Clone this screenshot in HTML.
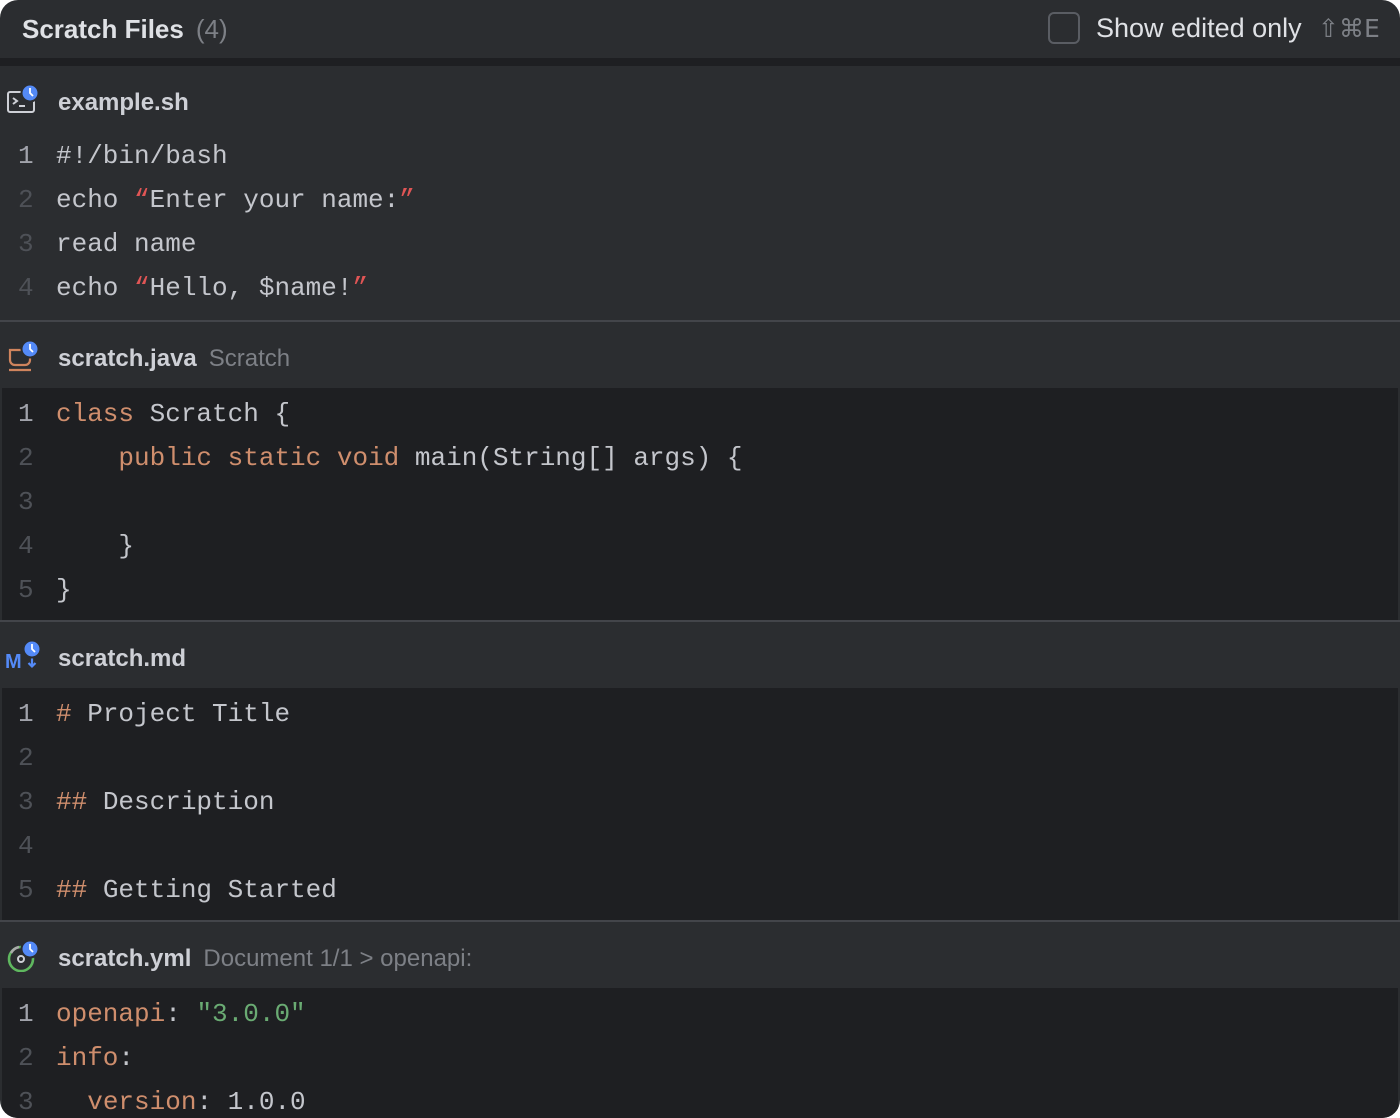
<!DOCTYPE html>
<html><head><meta charset="utf-8"><style>
*{margin:0;padding:0;box-sizing:border-box}
html,body{width:1400px;height:1118px;background:#fff;overflow:hidden}
.win{position:absolute;left:0;top:0;width:1400px;height:1118px;background:#2b2d30;border-radius:18px;overflow:hidden;font-family:"Liberation Sans",sans-serif}
.top{height:58px;position:relative}
.title{position:absolute;left:22px;top:14px;font-size:26px;font-weight:bold;color:#dfe1e5}
.title span{font-weight:normal;color:#7d8086;margin-left:12px}
.cb{position:absolute;left:1048px;top:12px;width:32px;height:32px;border:2px solid #5a5d63;border-radius:6px}
.show{position:absolute;left:1096px;top:13px;font-size:27px;color:#dfe1e5}
.kb{position:absolute;left:1318px;top:14px;font-size:25px;color:#7d8086;font-family:"DejaVu Sans",sans-serif}
.strip{height:8px;background:#1e1f22}
.sec{position:absolute;left:2px;right:2px;}
.hdr{height:64px;position:relative;background:#2b2d30}
.hdr .fn{position:absolute;left:56px;top:23px;font-size:24px;font-weight:bold;color:#ced0d6}
.hdr .fn span{font-weight:normal;color:#7d8086;margin-left:12px}
.hdr svg{position:absolute;left:2px;top:18px}
.code{font-family:"Liberation Mono",monospace;font-size:26px;color:#c4c6cc}
.pad{padding-top:4px}
.ln{height:44px;line-height:44px;position:relative;white-space:pre}
.ln .n{position:absolute;left:16px;color:#4e5157;width:20px}
.ln .n.a{color:#a1a3ab}
.ln .t{position:absolute;left:54px}
.k{color:#cf8e6d}.s{color:#6aab73}.r{color:#e05555}
.sep{position:absolute;left:0;right:0;height:2px;background:#43454a}
.dark{background:#1e1f22}
</style></head><body><div class="win">
<div class="top"><div class="title">Scratch Files<span>(4)</span></div><div class="cb"></div><div class="show">Show edited only</div><div class="kb">⇧⌘E</div></div>
<div class="strip"></div>

<div class="sec" style="top:66px;height:254px">
 <div class="hdr"><svg width="36" height="32" viewBox="0 0 36 32"><rect x="4" y="8" width="26" height="20" rx="2" fill="none" stroke="#ced0d6" stroke-width="2"/><path d="M9 14l4 3-4 3M15 22h6" stroke="#ced0d6" stroke-width="2" fill="none"/><circle cx="26" cy="9" r="8.5" fill="#548af7" stroke="#2b2d30" stroke-width="2"/><path d="M26 4v5l3 3" stroke="#fff" stroke-width="1.8" fill="none"/></svg><div class="fn">example.sh</div></div>
 <div class="code pad">
 <div class="ln"><span class="n a">1</span><span class="t">#!/bin/bash</span></div>
 <div class="ln"><span class="n">2</span><span class="t">echo <span class="r">“</span>Enter your name:<span class="r">”</span></span></div>
 <div class="ln"><span class="n">3</span><span class="t">read name</span></div>
 <div class="ln"><span class="n">4</span><span class="t">echo <span class="r">“</span>Hello, $name!<span class="r">”</span></span></div>
 </div>
</div>
<div class="sep" style="top:320px"></div>

<div class="sec" style="top:322px;height:298px">
 <div class="hdr" style="height:66px"><svg width="36" height="32" viewBox="0 0 36 32"><path d="M6 10h20v10a5 5 0 0 1-5 5H11a5 5 0 0 1-5-5z" fill="none" stroke="#d0845d" stroke-width="2.2"/><path d="M5 30h22" stroke="#d0845d" stroke-width="2.2"/><circle cx="26" cy="9" r="8.5" fill="#548af7" stroke="#2b2d30" stroke-width="2"/><path d="M26 4v5l3 3" stroke="#fff" stroke-width="1.8" fill="none"/></svg><div class="fn">scratch.java<span>Scratch</span></div></div>
 <div class="code dark pad" style="height:232px">
 <div class="ln"><span class="n a">1</span><span class="t"><span class="k">class</span> Scratch {</span></div>
 <div class="ln"><span class="n">2</span><span class="t">    <span class="k">public static void</span> main(String[] args) {</span></div>
 <div class="ln"><span class="n">3</span><span class="t"></span></div>
 <div class="ln"><span class="n">4</span><span class="t">    }</span></div>
 <div class="ln"><span class="n">5</span><span class="t">}</span></div>
 </div>
</div>
<div class="sep" style="top:620px"></div>

<div class="sec" style="top:622px;height:298px">
 <div class="hdr" style="height:66px"><svg width="36" height="32" viewBox="0 0 36 32"><text x="1" y="28" font-family="Liberation Sans" font-weight="bold" font-size="20" fill="#548af7">M</text><path d="M28 18v8M24.5 23l3.5 3.5 3.5-3.5" stroke="#548af7" stroke-width="2.2" fill="none"/><circle cx="28" cy="9" r="8.5" fill="#548af7" stroke="#2b2d30" stroke-width="2"/><path d="M28 4v5l3 3" stroke="#fff" stroke-width="1.8" fill="none"/></svg><div class="fn">scratch.md</div></div>
 <div class="code dark pad" style="height:232px">
 <div class="ln"><span class="n a">1</span><span class="t"><span class="k">#</span> Project Title</span></div>
 <div class="ln"><span class="n">2</span><span class="t"></span></div>
 <div class="ln"><span class="n">3</span><span class="t"><span class="k">##</span> Description</span></div>
 <div class="ln"><span class="n">4</span><span class="t"></span></div>
 <div class="ln"><span class="n">5</span><span class="t"><span class="k">##</span> Getting Started</span></div>
 </div>
</div>
<div class="sep" style="top:920px"></div>

<div class="sec" style="top:922px;height:196px">
 <div class="hdr" style="height:66px"><svg width="36" height="32" viewBox="0 0 36 32"><circle cx="17" cy="19" r="12" fill="none" stroke="#5fb85f" stroke-width="2.6"/><path d="M7 13a12 12 0 0 1 8-6" stroke="#aaa" stroke-width="2.6" fill="none"/><circle cx="17" cy="19" r="3" fill="none" stroke="#ced0d6" stroke-width="2"/><circle cx="26" cy="9" r="8.5" fill="#548af7" stroke="#2b2d30" stroke-width="2"/><path d="M26 4v5l3 3" stroke="#fff" stroke-width="1.8" fill="none"/></svg><div class="fn">scratch.yml<span>Document 1/1 &gt; openapi:</span></div></div>
 <div class="code dark pad" style="height:140px">
 <div class="ln"><span class="n a">1</span><span class="t"><span class="k">openapi</span>: <span class="s">"3.0.0"</span></span></div>
 <div class="ln"><span class="n">2</span><span class="t"><span class="k">info</span>:</span></div>
 <div class="ln"><span class="n">3</span><span class="t">  <span class="k">version</span>: 1.0.0</span></div>
 </div>
</div>
</div></body></html>
